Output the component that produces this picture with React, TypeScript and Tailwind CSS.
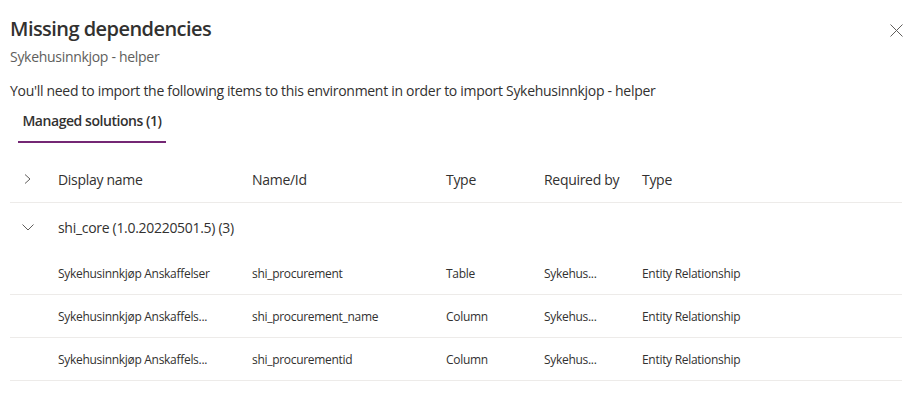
import React from "react";

const rows = [
  { display: "Sykehusinnkjøp Anskaffelser", name: "shi_procurement", type: "Table", req: "Sykehus...", type2: "Entity Relationship" },
  { display: "Sykehusinnkjøp Anskaffels...", name: "shi_procurement_name", type: "Column", req: "Sykehus...", type2: "Entity Relationship" },
  { display: "Sykehusinnkjøp Anskaffels...", name: "shi_procurementid", type: "Column", req: "Sykehus...", type2: "Entity Relationship" },
];

function ChevronRight() {
  return (
    <svg width="12" height="12" viewBox="0 0 12 12" fill="none">
      <path d="M4 1.5 L9 6 L4 10.5" stroke="#605e5c" strokeWidth="1" />
    </svg>
  );
}

function ChevronDown() {
  return (
    <svg width="14" height="12" viewBox="0 0 14 12" fill="none">
      <path d="M1.5 3.5 L7 9 L12.5 3.5" stroke="#605e5c" strokeWidth="1" />
    </svg>
  );
}

export default function App() {
  return (
    <div
      className="w-[915px] h-[406px] bg-white text-[#323130] relative overflow-hidden"
      style={{ fontFamily: '"Segoe UI", "Open Sans", "Noto Sans", sans-serif' }}
    >
      <button className="absolute left-[890px] top-[24px] w-[13px] h-[13px] flex items-center justify-center">
        <svg width="13" height="13" viewBox="0 0 13 13" fill="none">
          <path d="M0.5 0.5 L12.5 12.5 M12.5 0.5 L0.5 12.5" stroke="#605e5c" strokeWidth="1" />
        </svg>
      </button>
      <div className="pl-[10px] pt-[15px]">
        <h1 className="text-[20px] leading-[28px] font-semibold tracking-[-0.55px] text-[#323130]">Missing dependencies</h1>
        <div className="text-[14px] leading-[20px] text-[#605e5c] mt-[4px] tracking-[-0.3px]">Sykehusinnkjop - helper</div>
        <p className="text-[14px] leading-[20px] mt-[14px] tracking-[-0.3px]">
          You'll need to import the following items to this environment in order to import Sykehusinnkjop - helper
        </p>
        <div className="flex mt-[9px]">
          <div className="ml-[8px] w-[148px] flex flex-col items-center">
            <div className="text-[14px] leading-[20px] font-semibold tracking-[-0.45px] pt-[1px]">Managed solutions (1)</div>
            <div className="w-full h-[2px] bg-[#742774] mt-[10px]"></div>
          </div>
        </div>
        <div className="mt-[16px] w-[892px]">
          <div className="flex items-center h-[44px] border-b border-[#edebe9] text-[14px] tracking-[-0.3px] pb-[3px]">
            <div className="w-[48px] pl-[11px] flex"><ChevronRight /></div>
            <div className="w-[194px]">Display name</div>
            <div className="w-[194px]">Name/Id</div>
            <div className="w-[98px]">Type</div>
            <div className="w-[98px]">Required by</div>
            <div className="flex-1">Type</div>
          </div>
          <div className="flex items-center h-[49px] text-[14px] tracking-[-0.3px] pb-[1px]">
            <div className="w-[48px] pl-[11px] flex"><ChevronDown /></div>
            <div>shi_core (1.0.20220501.5) (3)</div>
          </div>
          {rows.map((r, i) => (
            <div key={i} className="flex items-center h-[43px] border-b border-[#edebe9] text-[12px] tracking-[-0.3px] pt-[2px]">
              <div className="w-[48px]"></div>
              <div className="w-[194px] truncate">{r.display}</div>
              <div className="w-[194px]">{r.name}</div>
              <div className="w-[98px]">{r.type}</div>
              <div className="w-[98px]">{r.req}</div>
              <div className="flex-1">{r.type2}</div>
            </div>
          ))}
        </div>
      </div>
    </div>
  );
}
